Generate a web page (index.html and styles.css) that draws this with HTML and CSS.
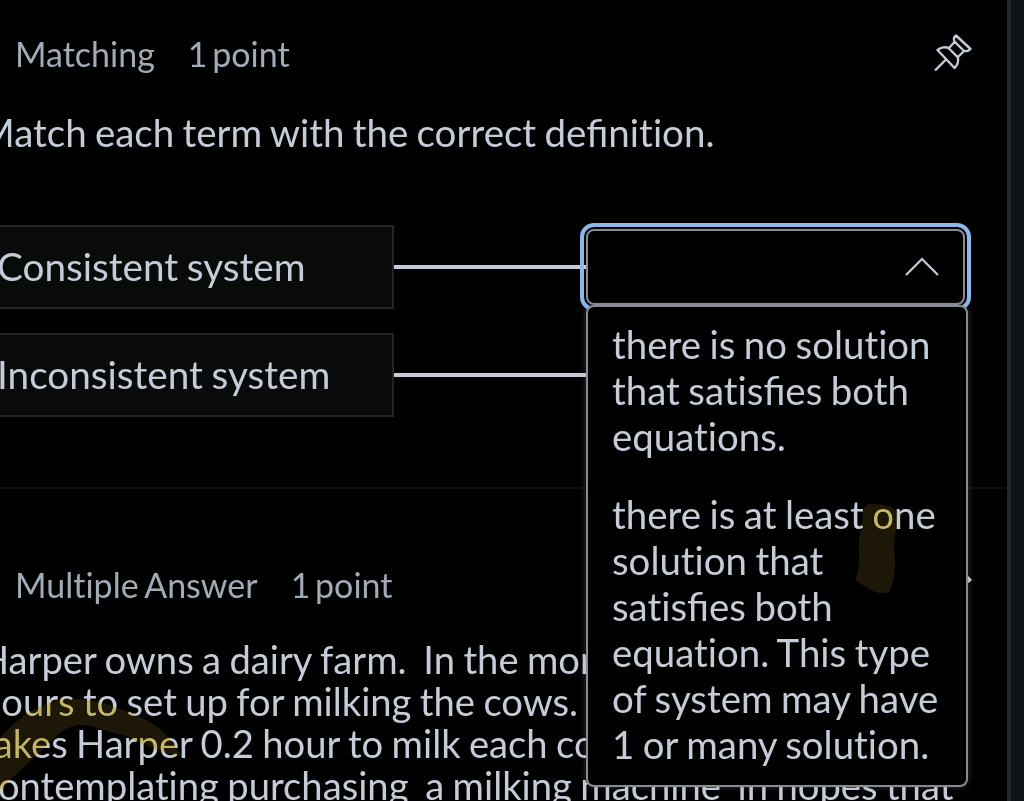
FILE: index.html
```
<!DOCTYPE html>
<html lang="en">
<head>
    <meta charset="UTF-8">
    <meta name="viewport" content="width=device-width, initial-scale=1.0">
    <title>Quiz</title>
    <link rel="stylesheet" href="styles.css">
</head>
<body>
    <svg width="0" height="0" class="defs">
        <symbol id="pin" viewBox="0 0 40 40">
            <path d="M2 37.5 L13.5 26 M23 2.5 C21.5 3.5 20.5 5 21 7 C21.3 8 21.5 8.5 22 9 L30.5 17.5 C32.5 18.5 35.5 18 37.5 16 Z M21.5 9 L15.5 15.5 M31 18 L24.5 24.5 M4.5 17 C8 14 13 13.5 16 15.5 L24.5 24 C26 27 25 32 21.5 35 Z"/>
        </symbol>
    </svg>
    <main>
        <section class="question matching">
            <header>
                <h2>Matching</h2>
                <span class="points">1 point</span>
                <svg class="pin"><use href="#pin"/></svg>
            </header>
            <p class="prompt">Match each term with the correct de<span class="lig">fi</span>nition.</p>
            <div class="pair">
                <div class="term">Consistent system</div>
                <div class="line"></div>
                <div class="select open">
                    <svg class="arrow" viewBox="0 0 36 20"><path d="M2 18 L18 2 L34 18"/></svg>
                    <ul class="menu">
                        <li>there is no solution<br>that satis<span class="lig">fi</span>es both<br>equations.</li>
                        <li>there is at least one<br>solution that<br>satis<span class="lig">fi</span>es both<br>equation. This type<br>of system may have<br>1 or many solution.</li>
                    </ul>
                </div>
            </div>
            <div class="pair">
                <div class="term">Inconsistent system</div>
                <div class="line"></div>
                <div class="select"></div>
            </div>
        </section>
        <section class="question">
            <header>
                <h2>Multiple Answer</h2>
                <span class="points">1 point</span>
                <svg class="pin"><use href="#pin"/></svg>
            </header>
            <p class="story">Harper owns a dairy farm.&nbsp; In the mor<br>hours to set up for milking the cows.<br>takes Harper 0.2 hour to milk each co<br>contemplating purchasing&nbsp; a milking machine&nbsp; in hopes that</p>
        </section>
    </main>
    <aside></aside>
    <!-- marker strokes over the page -->
    <svg class="marker tint" viewBox="0 0 1024 801">
        <path id="m1" d="M0 738 C14 722 34 704 64 699 C95 697 120 708 144 719 C162 727 174 741 181 756 C162 754 145 744 126 736 C104 731 94 725 80 725 C64 726 52 740 40 752 C26 766 14 775 0 790 Z"/>
        <path id="m2" d="M868 504 C878 503 892 506 897 511 C898 524 894 536 894 548 C896 562 896 580 889 592 C877 597 866 586 856 581 C856 574 860 566 859 556 C859 544 858 538 862 528 C863 518 861 508 868 504 Z"/>
    </svg>
    <svg class="marker glow" viewBox="0 0 1024 801">
        <use href="#m1"/>
        <use href="#m2"/>
    </svg>
</body>
</html>
```
FILE: styles.css
```
* {box-sizing: border-box;}
body {margin: 0; height: 801px; display: flex; overflow: hidden; position: relative;
    background-color: #000; color: #c6ccd7;
    font-family: Lato, sans-serif; font-size: 38.4px; word-spacing: -1.3px;
    font-variant-ligatures: none;
}
.lig {font-variant-ligatures: normal;}
.defs {position: absolute;}
main {width: 1007px; height: 801px; overflow: hidden;}
aside {flex: 1; background-color: #0e1214; border-left: 4px solid #26272b;}

.question {height: 531px; padding-right: 34px;}
.matching {height: 489px; border-bottom: 2px solid #0d0e10; padding-top: 31px;}
.question + .question {padding-top: 73px;}

header {display: flex; height: 46px; padding-left: 15px; color: #a2aab6; font-size: 34px; line-height: 45px; word-spacing: -4px;}
h2 {margin: 0; font-size: inherit; font-weight: normal; word-spacing: -2px;}
.points {margin-left: 33px;}
.pin {width: 40px; height: 40px; margin: 2px 0 0 auto; fill: none; stroke: #c6ccd7; stroke-width: 2.4; stroke-linejoin: round;}

p {margin: 0; white-space: nowrap;}
.prompt {margin: 32px 0 70px -21px; font-size: 38.5px; line-height: 46px; word-spacing: -1.6px;}
.story {margin: 30px 0 0 -20px; font-size: 38.2px; line-height: 42px; word-spacing: -1.4px;}

.pair {display: flex; align-items: center; height: 84px; margin-bottom: 24px;}
.term {width: 394px; height: 84px; line-height: 79px; text-indent: -3px; font-size: 38.7px;
    background-color: #090b0b; border: 2px solid #232428; border-left: none;}
.line {width: 192px; height: 4px; background-color: #c6ccd7;}
.select {position: relative; flex: none; width: 379px; height: 76px; border: 2px solid #888b91; border-radius: 8px; background-color: #000;}
.open {z-index: 2; outline: 4px solid #8ab8ea; outline-offset: 2px;}
.arrow {position: absolute; right: 23px; top: 26px; width: 36px; height: 20px; fill: none; stroke: #c6ccd7; stroke-width: 2.2;}

.menu {position: absolute; left: -2px; top: 74px; width: 382px; height: 482px; margin: 0; padding: 14px 0 0 24px;
    list-style: none; line-height: 46px; white-space: nowrap;
    background-color: #000; border: 2px solid #888b91; border-radius: 8px; box-shadow: 0 0 6px rgba(140, 150, 165, 0.35);}
.menu li {margin-bottom: 32px;}

.marker {position: absolute; left: 0; top: 0; z-index: 5; width: 1024px; height: 801px;}
.tint {fill: #ffe278; mix-blend-mode: multiply;}
.glow {fill: #1c1706; mix-blend-mode: lighten;}
```
